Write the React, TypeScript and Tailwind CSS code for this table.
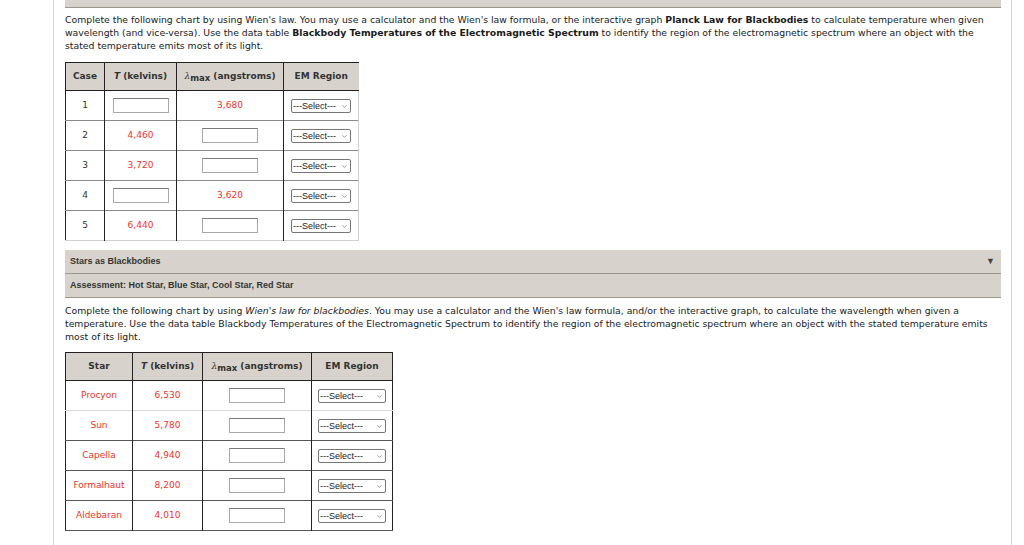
import { ChevronDown } from 'lucide-react';

type Row1 = { id: number; temp?: string; lambda?: string };
type Row2 = { star: string; temp: string };

const caseRows: Row1[] = [
  { id: 1, lambda: '3,680' },
  { id: 2, temp: '4,460' },
  { id: 3, temp: '3,720' },
  { id: 4, lambda: '3,620' },
  { id: 5, temp: '6,440' },
];

const starRows: Row2[] = [
  { star: 'Procyon', temp: '6,530' },
  { star: 'Sun', temp: '5,780' },
  { star: 'Capella', temp: '4,940' },
  { star: 'Formalhaut', temp: '8,200' },
  { star: 'Aldebaran', temp: '4,010' },
];

function TextBox() {
  return (
    <input
      type="text"
      className="mx-auto block h-[15px] w-[56px] border border-[#a8a8a8] border-t-[#7a7a7a] bg-white"
    />
  );
}

function SelectBox({ width }: { width: string }) {
  return (
    <div className={`relative mx-auto h-[14px] ${width}`}>
      <select className="h-full w-full appearance-none rounded-[2px] border border-[#767676] bg-white pl-[1px] text-[9px] leading-[12px] text-[#222] [font-family:'Liberation_Sans',Arial,sans-serif]">
        <option>---Select---</option>
      </select>
      <ChevronDown className="pointer-events-none absolute right-[3px] top-[4px] h-[7px] w-[7px] text-[#333]" strokeWidth={1.75} />
    </div>
  );
}

function Lambda() {
  return (
    <span>
      <span className="font-normal italic [font-family:'DejaVu_Serif',serif]">λ</span>
      <sub className="text-[8.5px]">max</sub> (angstroms)
    </span>
  );
}

export default function App() {
  return (
    <div className="min-h-screen bg-white pl-[53px] text-[9.3px] leading-[13px] text-[#1a1a1a] [font-family:'DejaVu_Sans',Verdana,sans-serif]">
      <div className="min-h-[545px] w-[959px] border-x border-[#d6d6d6] pl-[11px] pr-[10px] pb-[20px]">
        <div className="h-[8px] border-b border-[#9c978d] bg-[#d7d3cc]" />

        <p className="mt-[5px]">
          Complete the following chart by using Wien's law. You may use a calculator and the Wien's law formula, or the interactive graph{' '}
          <b>Planck Law for Blackbodies</b> to calculate temperature when given wavelength (and vice-versa). Use the data table{' '}
          <b>Blackbody Temperatures of the Electromagnetic Spectrum</b> to identify the region of the electromagnetic spectrum where an object with the stated temperature emits most of its light.
        </p>

        <table className="mt-[10px] border-collapse border-l border-t border-[#222] text-center text-[9px]">
          <thead>
            <tr className="h-[28px] bg-[#d7d3cc] font-bold text-[#333]">
              <th className="w-[39px] border-r border-b border-[#222]">Case</th>
              <th className="w-[72px] border-r border-b border-[#222]">
                <i>T</i> (kelvins)
              </th>
              <th className="w-[107px] border-r border-b border-[#222]">
                <Lambda />
              </th>
              <th className="w-[75px] border-b border-[#222]">EM Region</th>
            </tr>
          </thead>
          <tbody>
            {caseRows.map((r) => (
              <tr key={r.id} className="h-[30px] border-b border-[#8a8a8a] last:border-[#d0d0d0]">
                <td className="border-r border-[#222] text-[#333]">{r.id}</td>
                <td className="border-r border-[#222] text-[#e8362c]">{r.temp ?? <TextBox />}</td>
                <td className="border-r border-[#222] text-[#e8362c]">{r.lambda ?? <TextBox />}</td>
                <td className="border-r border-[#d0d0d0]">
                  <SelectBox width="w-[60px]" />
                </td>
              </tr>
            ))}
          </tbody>
        </table>

        <div className="mt-[9px] [font-family:'Liberation_Sans',Arial,sans-serif] text-[9px] font-bold text-[#333]">
          <div className="flex h-[24px] items-center justify-between border-b border-[#9c978d] bg-[#d7d3cc] pl-[5px] pr-[6px]">
            <span>Stars as Blackbodies</span>
            <span className="text-[9px] text-[#444]">▼</span>
          </div>
          <div className="flex h-[24px] items-center border-b border-[#9c978d] bg-[#d7d3cc] pl-[5px]">
            Assessment: Hot Star, Blue Star, Cool Star, Red Star
          </div>
        </div>

        <p className="mt-[6px]">
          Complete the following chart by using <i>Wien's law for blackbodies</i>. You may use a calculator and the Wien's law formula, and/or the interactive graph, to calculate the wavelength when given a temperature. Use the data table Blackbody Temperatures of the Electromagnetic Spectrum to identify the region of the electromagnetic spectrum where an object with the stated temperature emits most of its light.
        </p>

        <table className="mt-[9px] border-collapse border border-[#222] text-center text-[9px]">
          <thead>
            <tr className="h-[28px] bg-[#d7d3cc] font-bold text-[#333]">
              <th className="w-[67px] border-r border-b border-[#222]">Star</th>
              <th className="w-[70px] border-r border-b border-[#222]">
                <i>T</i> (kelvins)
              </th>
              <th className="w-[109px] border-r border-b border-[#222]">
                <Lambda />
              </th>
              <th className="w-[81px] border-b border-[#222]">EM Region</th>
            </tr>
          </thead>
          <tbody>
            {starRows.map((r, i) => (
              <tr key={r.star} className={`h-[30px] border-b ${i === 0 ? 'border-[#d8d8d8]' : 'border-[#555]'}`}>
                <td className="border-r border-[#222] text-[#e8362c]">{r.star}</td>
                <td className="border-r border-[#222] text-[#e8362c]">{r.temp}</td>
                <td className="border-r border-[#222]">
                  <TextBox />
                </td>
                <td>
                  <SelectBox width="w-[68px]" />
                </td>
              </tr>
            ))}
          </tbody>
        </table>
      </div>
    </div>
  );
}
